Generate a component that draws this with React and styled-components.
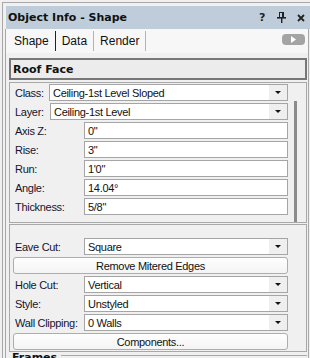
import React from "react";
import styled, { createGlobalStyle } from "styled-components";

const Global = createGlobalStyle`
  html, body { margin: 0; padding: 0; background: #f0f0f0; }
  * { box-sizing: border-box; }
`;

const Win = styled.div`
  width: 310px;
  height: 358px;
  overflow: hidden;
  padding: 2px 0 0 2px;
  background: #f0f0f0;
  font-family: "Liberation Sans", Arial, sans-serif;
  color: #111;
`;

const Frame = styled.div`
  height: 100%;
  border-top: 1px solid #a8a8a8;
  border-left: 1px solid #a8a8a8;
  padding: 3px 0 0 2px;
  display: flex;
  flex-direction: column;
`;

const TitleBar = styled.div`
  height: 23px;
  flex-shrink: 0;
  margin-left: 1px;
  background: #bfcddb;
  display: flex;
  align-items: center;
  padding: 0 5px 0 2px;
`;

const Title = styled.div`
  flex: 1;
  font-family: "DejaVu Sans", Tahoma, sans-serif;
  font-weight: bold;
  font-size: 11px;
  color: #111;
`;

const TitleIcons = styled.div`
  display: flex;
  align-items: center;
  gap: 11px;
`;

const Help = styled.span`
  font-family: "DejaVu Sans", sans-serif;
  font-weight: bold;
  font-size: 11px;
  color: #222;
  width: 7px;
`;

const Body = styled.div`
  flex: 1;
  min-height: 0;
  border-left: 1px solid #a8a8a8;
  border-right: 1px solid #a8a8a8;
  margin-right: 1px;
  display: flex;
  flex-direction: column;
`;

const TabRow = styled.div`
  height: 24px;
  flex-shrink: 0;
  background: #f7f7f7;
  display: flex;
  align-items: center;
  padding: 0 3px 0 2px;
`;

const Tab = styled.div`
  font-size: 12px;
  height: 20px;
  display: flex;
  align-items: center;
  padding: 0 6px;
  border-right: 1px solid ${(p) => (p.$active ? "#222" : "#b4b4b4")};
  color: #111;
`;

const Spacer = styled.div`
  flex: 1;
`;

const Pill = styled.div`
  width: 23px;
  height: 11px;
  border-radius: 4px;
  background: #a4a4a4;
  display: flex;
  align-items: center;
  justify-content: center;
  margin-bottom: 3px;
`;

const Content = styled.div`
  flex: 1;
  min-height: 0;
  padding: 5px 1px 0 3px;
  display: flex;
  flex-direction: column;
  overflow: hidden;
`;

const Header = styled.div`
  height: 22px;
  flex-shrink: 0;
  border: 2px solid #777;
  background: #ececec;
  display: flex;
  align-items: center;
  padding-left: 2px;
  font-family: "DejaVu Sans", Tahoma, sans-serif;
  font-weight: bold;
  font-size: 11px;
  color: #111;
`;

const Legend = styled.div`
  flex-shrink: 0;
  display: flex;
  align-items: flex-start;
  padding-left: 3px;
  margin-top: 0px;
  font-family: "DejaVu Sans", Tahoma, sans-serif;
  font-weight: bold;
  font-size: 11px;
  line-height: 11px;
  color: #111;
  &::after {
    content: "";
    flex: 1;
    margin: 3px 0 0 4px;
    border-top: 1px solid #a8a8a8;
  }
`;

const Panel = styled.div`
  flex-shrink: 0;
  margin-top: ${(p) => p.$mt}px;
  border: 1px solid #a8a8a8;
  display: grid;
  grid-template-columns: 1fr 18px;
`;

const Fields = styled.div`
  display: flex;
  flex-direction: column;
  gap: 2px;
  padding: ${(p) => p.$pad};
`;

const Track = styled.div`
  padding: 18px 0 0 6px;
  display: flex;
`;

const Thumb = styled.div`
  width: 3px;
  background: #8c8c8c;
`;

const Row = styled.div`
  display: flex;
  align-items: center;
  height: 17px;
  padding-left: ${(p) => p.$indent ?? 5}px;
`;

const Label = styled.div`
  width: ${(p) => p.$w}px;
  flex-shrink: 0;
  font-size: 11px;
  letter-spacing: -0.3px;
  color: #141430;
  white-space: nowrap;
`;

const Box = styled.div`
  flex: 1;
  height: 17px;
  border: 1px solid #a5a5a5;
  background: #fff;
  display: flex;
  align-items: center;
  font-size: 11px;
  letter-spacing: -0.3px;
  color: #111;
  white-space: nowrap;
  overflow: hidden;
`;

const BoxText = styled.div`
  flex: 1;
  padding-left: 3px;
`;

const Arrow = styled.div`
  width: 18px;
  height: 100%;
  background: #efefef;
  display: flex;
  align-items: center;
  justify-content: center;
  &::after {
    content: "";
    border-left: 3px solid transparent;
    border-right: 3px solid transparent;
    border-top: 3px solid #111;
  }
`;

const Button = styled.div`
  flex: 1;
  height: 17px;
  border: 1px solid #adadad;
  border-radius: 3px;
  background: linear-gradient(#fefefe, #f4f4f4);
  display: flex;
  align-items: center;
  justify-content: center;
  font-size: 11px;
  letter-spacing: -0.3px;
  color: #111;
`;

const Select = ({ value }) => (
  <Box>
    <BoxText>{value}</BoxText>
    <Arrow />
  </Box>
);

const Input = ({ value }) => (
  <Box>
    <BoxText>{value}</BoxText>
  </Box>
);

const Field = ({ label, w = 69, children }) => (
  <Row>
    <Label $w={w}>{label}</Label>
    {children}
  </Row>
);

const PinIcon = () => (
  <svg width="9" height="11" viewBox="0 0 9 11">
    <rect x="2.5" y="0.5" width="4" height="5" fill="none" stroke="#222" strokeWidth="1" />
    <rect x="5" y="0" width="2" height="6" fill="#222" />
    <rect x="0" y="5" width="9" height="1.6" fill="#222" />
    <rect x="4" y="6" width="1.4" height="5" fill="#222" />
  </svg>
);

const CloseIcon = () => (
  <svg width="8" height="8" viewBox="0 0 8 8">
    <path d="M1 1 L7 7 M7 1 L1 7" stroke="#222" strokeWidth="1.8" />
  </svg>
);

export default function App() {
  return (
    <>
      <Global />
      <Win>
        <Frame>
          <TitleBar>
            <Title>Object Info - Shape</Title>
            <TitleIcons>
              <Help>?</Help>
              <PinIcon />
              <CloseIcon />
            </TitleIcons>
          </TitleBar>
          <Body>
            <TabRow>
              <Tab $active>Shape</Tab>
              <Tab>Data</Tab>
              <Tab>Render</Tab>
              <Spacer />
              <Pill>
                <svg width="5" height="7" viewBox="0 0 5 7">
                  <path d="M0 0 L5 3.5 L0 7 Z" fill="#fff" />
                </svg>
              </Pill>
            </TabRow>
            <Content>
              <Header>Roof Face</Header>
              <Panel $mt={2}>
                <Fields $pad="1px 0 7px 0">
                  <Field label="Class:" w={34}>
                    <Select value="Ceiling-1st Level Sloped" />
                  </Field>
                  <Field label="Layer:" w={35}>
                    <Select value="Ceiling-1st Level" />
                  </Field>
                  <Field label="Axis Z:">
                    <Input value={'0"'} />
                  </Field>
                  <Field label="Rise:">
                    <Input value={'3"'} />
                  </Field>
                  <Field label="Run:">
                    <Input value={`1'0"`} />
                  </Field>
                  <Field label="Angle:">
                    <Input value="14.04°" />
                  </Field>
                  <Field label="Thickness:">
                    <Input value={'5/8"'} />
                  </Field>
                </Fields>
                <Track>
                  <Thumb />
                </Track>
              </Panel>
              <Panel $mt={1}>
                <Fields $pad="13px 0 1px 0">
                  <Field label="Eave Cut:">
                    <Select value="Square" />
                  </Field>
                  <Row $indent={3}>
                    <Button>Remove Mitered Edges</Button>
                  </Row>
                  <Field label="Hole Cut:">
                    <Select value="Vertical" />
                  </Field>
                  <Field label="Style:">
                    <Select value="Unstyled" />
                  </Field>
                  <Field label="Wall Clipping:">
                    <Select value="0 Walls" />
                  </Field>
                  <Row $indent={3}>
                    <Button>Components...</Button>
                  </Row>
                </Fields>
                <Track />
              </Panel>
              <Legend>Frames</Legend>
            </Content>
          </Body>
        </Frame>
      </Win>
    </>
  );
}
